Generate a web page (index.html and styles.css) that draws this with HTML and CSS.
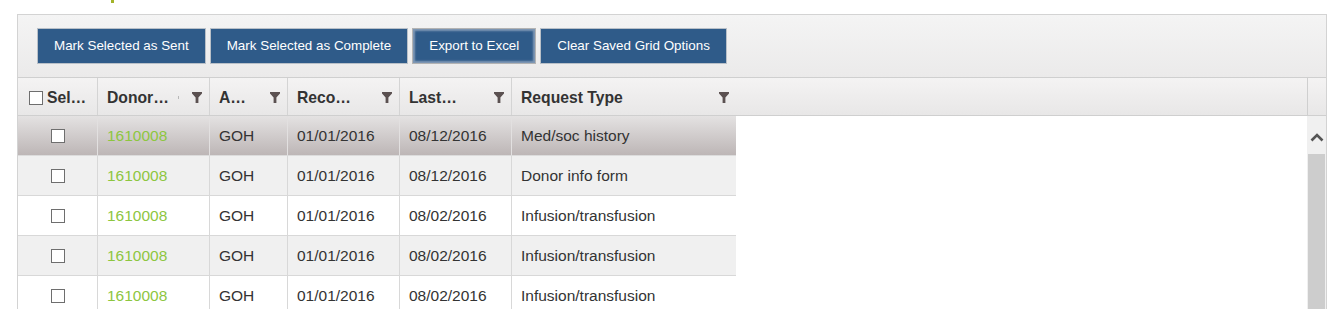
FILE: index.html
```html
<!DOCTYPE html>
<html>
<head>
<meta charset="utf-8">
<link rel="stylesheet" href="styles.css">
</head>
<body>
<div class="title-row"><span class="title-mark"></span></div>
<div class="grid">
  <div class="toolbar">
    <button class="btn">Mark Selected as Sent</button>
    <button class="btn">Mark Selected as Complete</button>
    <button class="btn btn-focus">Export to Excel</button>
    <button class="btn">Clear Saved Grid Options</button>
  </div>
  <div class="grid-header">
    <div class="hcell col-sel"><span class="cb"></span><span class="htext">Sel…</span></div>
    <div class="hcell col-donor"><span class="htext">Donor…</span><span class="sort-dot"></span><svg class="filter" viewBox="0 0 10 11"><path d="M0 0H10V1.6L6.4 5.6V11H3.6V5.6L0 1.6Z"/></svg></div>
    <div class="hcell col-a"><span class="htext">A…</span><svg class="filter" viewBox="0 0 10 11"><path d="M0 0H10V1.6L6.4 5.6V11H3.6V5.6L0 1.6Z"/></svg></div>
    <div class="hcell col-reco"><span class="htext">Reco…</span><svg class="filter" viewBox="0 0 10 11"><path d="M0 0H10V1.6L6.4 5.6V11H3.6V5.6L0 1.6Z"/></svg></div>
    <div class="hcell col-last"><span class="htext">Last…</span><svg class="filter" viewBox="0 0 10 11"><path d="M0 0H10V1.6L6.4 5.6V11H3.6V5.6L0 1.6Z"/></svg></div>
    <div class="hcell col-type"><span class="htext">Request Type</span><svg class="filter" viewBox="0 0 10 11"><path d="M0 0H10V1.6L6.4 5.6V11H3.6V5.6L0 1.6Z"/></svg></div>
    <div class="hfill"></div>
    <div class="hscroll"></div>
  </div>
  <div class="grid-body">
    <div class="rows">
      <div class="row row-selected">
        <div class="cell col-sel"><span class="cb"></span></div>
        <div class="cell col-donor link">1610008</div>
        <div class="cell col-a">GOH</div>
        <div class="cell col-reco">01/01/2016</div>
        <div class="cell col-last">08/12/2016</div>
        <div class="cell col-type">Med/soc history</div>
      </div>
      <div class="row row-alt">
        <div class="cell col-sel"><span class="cb"></span></div>
        <div class="cell col-donor link">1610008</div>
        <div class="cell col-a">GOH</div>
        <div class="cell col-reco">01/01/2016</div>
        <div class="cell col-last">08/12/2016</div>
        <div class="cell col-type">Donor info form</div>
      </div>
      <div class="row">
        <div class="cell col-sel"><span class="cb"></span></div>
        <div class="cell col-donor link">1610008</div>
        <div class="cell col-a">GOH</div>
        <div class="cell col-reco">01/01/2016</div>
        <div class="cell col-last">08/02/2016</div>
        <div class="cell col-type">Infusion/transfusion</div>
      </div>
      <div class="row row-alt">
        <div class="cell col-sel"><span class="cb"></span></div>
        <div class="cell col-donor link">1610008</div>
        <div class="cell col-a">GOH</div>
        <div class="cell col-reco">01/01/2016</div>
        <div class="cell col-last">08/02/2016</div>
        <div class="cell col-type">Infusion/transfusion</div>
      </div>
      <div class="row">
        <div class="cell col-sel"><span class="cb"></span></div>
        <div class="cell col-donor link">1610008</div>
        <div class="cell col-a">GOH</div>
        <div class="cell col-reco">01/01/2016</div>
        <div class="cell col-last">08/02/2016</div>
        <div class="cell col-type">Infusion/transfusion</div>
      </div>
    </div>
    <div class="body-fill"></div>
    <div class="vscroll">
      <div class="vs-arrow"><svg viewBox="0 0 14 10" width="14" height="10"><path d="M1.5 8.5L7 3L12.5 8.5" fill="none" stroke="#555" stroke-width="2.6"/></svg></div>
      <div class="vs-thumb"></div>
    </div>
  </div>
</div>
</body>
</html>
```

FILE: styles.css
```css
html, body {
  margin: 0;
  padding: 0;
  background: #fff;
  overflow: hidden;
  font-family: "Liberation Sans", Arial, sans-serif;
}

.title-row {
  height: 14px;
  display: flex;
  align-items: flex-start;
}

.title-mark {
  display: block;
  margin-left: 111px;
  width: 3px;
  height: 3px;
  background: #a3b32a;
}

.grid {
  margin-left: 17px;
  width: 1310px;
  box-sizing: border-box;
  border: 1px solid #d3d3d3;
  border-bottom: none;
}

.toolbar {
  height: 63px;
  box-sizing: border-box;
  padding: 13px 0 0 19px;
  display: flex;
  align-items: flex-start;
  gap: 4px;
  background: linear-gradient(#f4f4f4, #ebeaea);
  border-bottom: 1px solid #cfcfcf;
}

.btn {
  height: 36px;
  box-sizing: border-box;
  padding: 0 16px;
  background: #2f5b89;
  color: #fff;
  border: 1px solid #b9c0c8;
  font-family: "Liberation Sans", Arial, sans-serif;
  font-size: 13.4px;
  line-height: 34px;
  cursor: pointer;
}

.btn-focus {
  border-color: #b3b3b3;
  box-shadow: inset 0 0 2px 2px rgba(170, 185, 205, 0.65);
}

.grid-header {
  display: flex;
  height: 38px;
  box-sizing: border-box;
  background: linear-gradient(#f4f3f3, #e8e7e7);
  border-bottom: 1px solid #cfcfcf;
}

.col-sel { width: 80px; }
.col-donor { width: 112px; }
.col-a { width: 78px; }
.col-reco { width: 112px; }
.col-last { width: 112px; }
.col-type { width: 224px; }

.hcell {
  box-sizing: border-box;
  display: flex;
  align-items: center;
  padding: 2px 7px 0 9px;
  border-right: 1px solid #d4d4d4;
  font-weight: bold;
  font-size: 15.7px;
  color: #333;
  white-space: nowrap;
}

.hcell.col-sel {
  padding-left: 11px;
  gap: 4px;
}

.hcell.col-type {
  border-right: none;
}

.htext {
  flex: 0 0 auto;
}

.sort-dot {
  width: 1px;
  height: 3px;
  background: #b8b8b8;
  margin-left: auto;
  margin-right: 13px;
}

.filter {
  width: 10px;
  height: 11px;
  margin-left: auto;
  fill: #5b5151;
  flex: 0 0 auto;
}

.sort-dot + .filter {
  margin-left: 0;
}

.hfill {
  flex: 1;
}

.hscroll {
  width: 19px;
  box-sizing: border-box;
  border-left: 1px solid #cfcfcf;
}

.grid-body {
  display: flex;
  height: 200px;
  overflow: hidden;
}

.rows {
  width: 718px;
  flex: 0 0 auto;
}

.row {
  display: flex;
  height: 40px;
  box-sizing: border-box;
  border-bottom: 1px solid #d8d8d8;
  background: #fff;
}

.row-alt {
  background: #f0f0f0;
}

.row-selected {
  background: linear-gradient(#e4e2e2, #bdb6b6);
  border-bottom-color: #dcdcdc;
}

.cell {
  box-sizing: border-box;
  display: flex;
  align-items: center;
  padding-left: 9px;
  padding-top: 1px;
  border-right: 1px solid #d8d8d8;
  font-size: 15.5px;
  color: #333;
  white-space: nowrap;
}

.row-selected .cell {
  border-right-color: #e2e0e0;
}

.cell.col-type {
  border-right: none;
}

.cell.col-sel {
  justify-content: center;
  padding-left: 0;
  padding-top: 0;
}

.link {
  color: #8dc63f;
}

.cb {
  display: block;
  width: 14px;
  height: 14px;
  box-sizing: border-box;
  border: 1px solid #6e6e6e;
  background: #fff;
  flex: 0 0 auto;
}

.body-fill {
  flex: 1;
}

.vscroll {
  width: 19px;
  display: flex;
  flex-direction: column;
  background: #f0f0f0;
}

.vs-arrow {
  height: 38px;
  display: flex;
  align-items: center;
  justify-content: center;
  padding-top: 4px;
  box-sizing: border-box;
}

.vs-thumb {
  flex: 1;
  margin: 0 1px 0 1px;
  background: #cdcdcd;
}
```
